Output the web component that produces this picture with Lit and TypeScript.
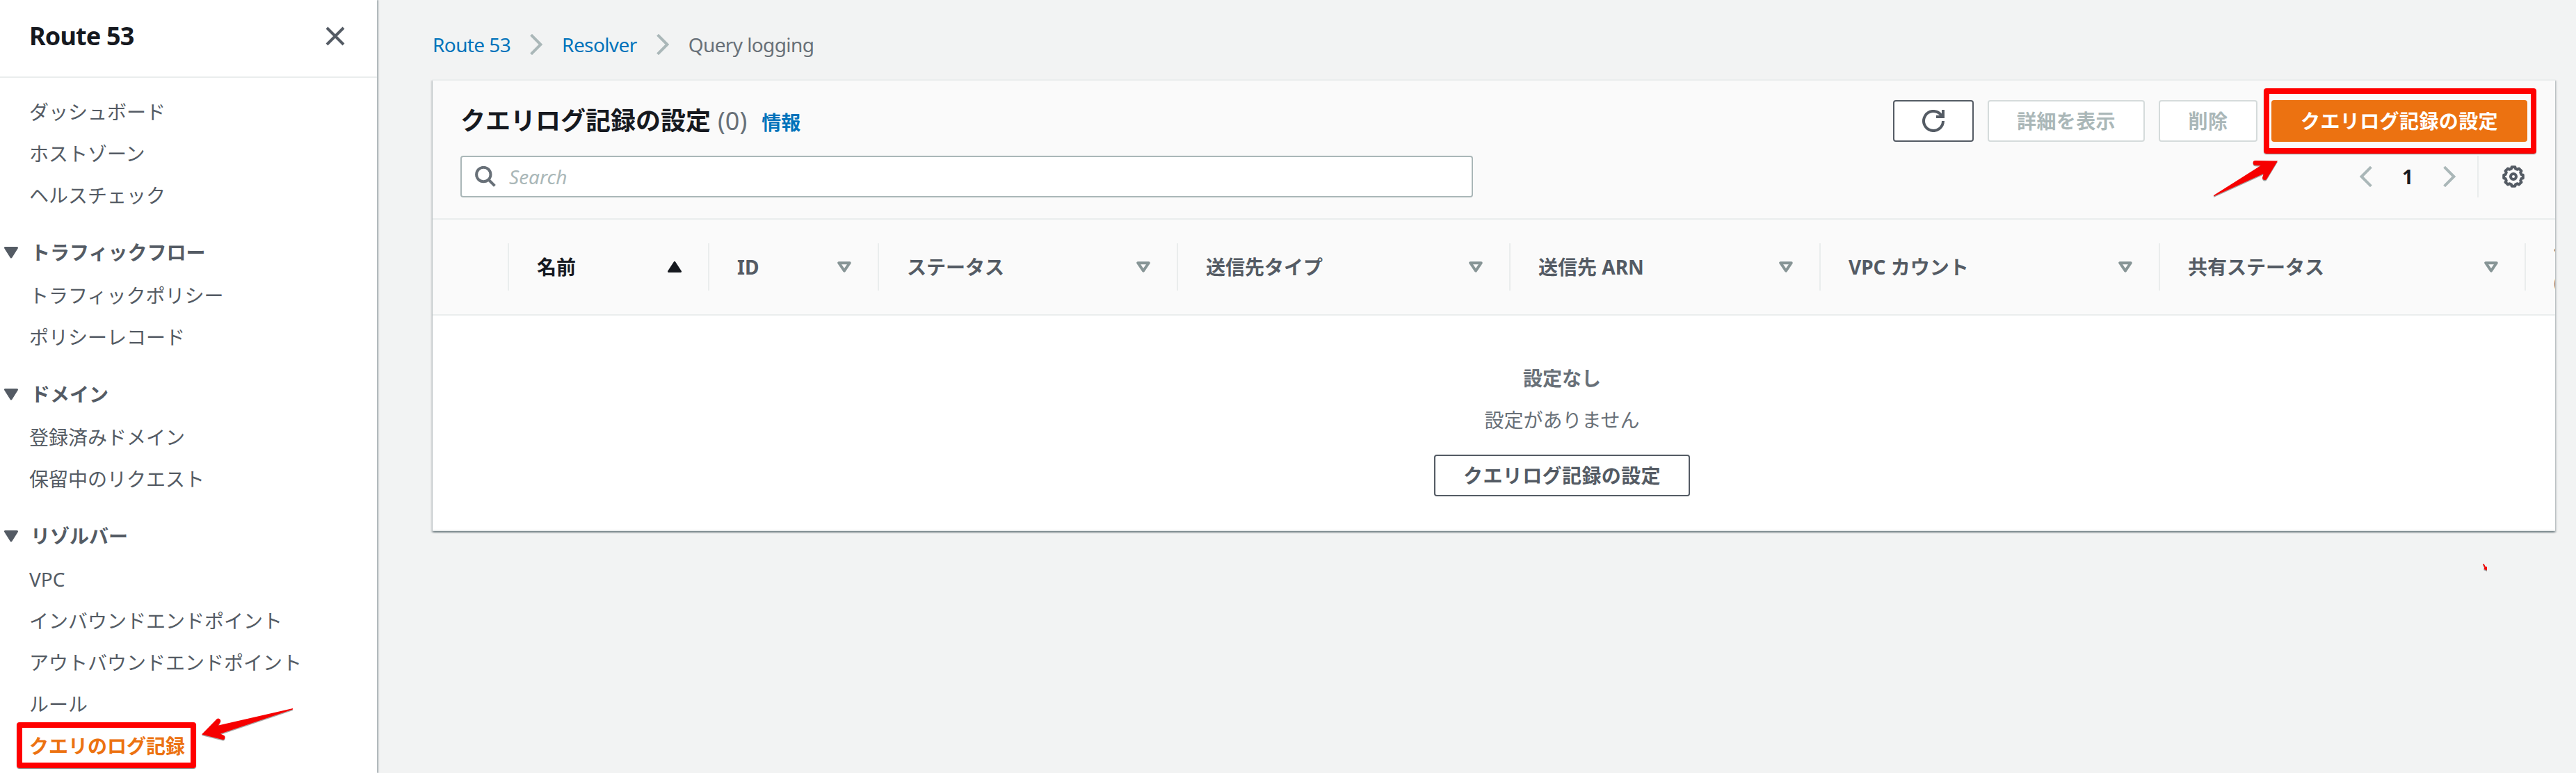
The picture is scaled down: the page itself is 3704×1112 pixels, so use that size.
import { LitElement, html, css, svg } from "lit";
import { customElement } from "lit/decorators.js";

interface NavGroup {
  title?: string;
  items: { label: string; active?: boolean }[];
}

const NAV: NavGroup[] = [
  { items: [{ label: "ダッシュボード" }, { label: "ホストゾーン" }, { label: "ヘルスチェック" }] },
  { title: "トラフィックフロー", items: [{ label: "トラフィックポリシー" }, { label: "ポリシーレコード" }] },
  { title: "ドメイン", items: [{ label: "登録済みドメイン" }, { label: "保留中のリクエスト" }] },
  {
    title: "リゾルバー",
    items: [
      { label: "VPC" },
      { label: "インバウンドエンドポイント" },
      { label: "アウトバウンドエンドポイント" },
      { label: "ルール" },
      { label: "クエリのログ記録", active: true },
    ],
  },
];

const COLUMNS = [
  { label: "名前", width: 288, sorted: true },
  { label: "ID", width: 244 },
  { label: "ステータス", width: 430 },
  { label: "送信先タイプ", width: 478 },
  { label: "送信先 ARN", width: 446 },
  { label: "VPC カウント", width: 488 },
  { label: "共有ステータス", width: 526 },
];

const chevron = (dir: "left" | "right") => html`<svg class="chevron" viewBox="0 0 18 30" width="18" height="30">
  <path d=${dir === "right" ? "M1.6 1.2 L15.4 15 L1.6 28.8" : "M16.4 1.2 L2.6 15 L16.4 28.8"} />
</svg>`;

const gearPath = (() => {
  const pts: string[] = [];
  const n = 8;
  for (let i = 0; i < n; i++) {
    const a = (i * 2 * Math.PI) / n - Math.PI / 2;
    for (const [off, r] of [[-0.17, 14], [0.17, 14], [0.26, 11.8], [0.525, 11.8]] as const) {
      pts.push(`${(16 + r * Math.cos(a + off)).toFixed(2)} ${(16 + r * Math.sin(a + off)).toFixed(2)}`);
    }
  }
  return `M${pts.join("L")}Z`;
})();

@customElement("app-root")
export class AppRoot extends LitElement {
  static styles = css`
    :host {
      display: block;
      position: relative;
      width: 3704px;
      height: 1112px;
      overflow: hidden;
      background: #f2f3f3;
      color: #545b64;
      font-family: "Noto Sans", "Noto Sans CJK JP", sans-serif;
      font-size: 28px;
      line-height: 44px;
    }
    * { box-sizing: border-box; }
    svg { display: block; flex: none; }
    .layout { display: flex; height: 1112px; }
    .sidebar {
      flex: none;
      width: 542px;
      background: #fff;
      box-shadow: 2px 0 2px 0 rgba(0, 28, 36, 0.3);
      white-space: nowrap;
    }
    .side-head {
      display: flex;
      align-items: center;
      justify-content: space-between;
      height: 112px;
      padding: 0 46px 6px 42px;
      border-bottom: 2px solid #eaeded;
    }
    .side-title { font-size: 36px; font-weight: 700; letter-spacing: -0.85px; color: #16191f; }
    .close path { stroke: #545b64; stroke-width: 4; fill: none; }
    .nav { padding-top: 27px; }
    .item { padding: 0 0 0 42px; margin-bottom: 16px; height: 44px; }
    .item.active { color: #ec7211; font-weight: 700; }
    .group-title {
      display: flex;
      align-items: center;
      gap: 18px;
      height: 44px;
      margin: 38px 0 18px;
      padding-left: 6px;
      font-weight: 700;
    }
    .main { flex: 1; min-width: 0; padding-left: 80px; }
    .crumbs { height: 114px; padding-top: 42px; color: #687078; letter-spacing: -0.6px; }
    .crumbs a { color: #0073bb; }
    .crumbs .chevron { margin: 0 28px; }
    .crumb-row { display: flex; align-items: center; height: 44px; }
    .chevron path { fill: none; stroke: #aab7b8; stroke-width: 4; }
    .panel {
      width: 3052px;
      height: 650px;
      border-top: 2px solid #eaeded;
      border-bottom: 2px solid #eaeded;
      background: #fff;
      box-shadow: 0 2px 2px 0 rgba(0, 28, 36, 0.3), 2px 2px 2px 0 rgba(0, 28, 36, 0.15), -2px 2px 2px 0 rgba(0, 28, 36, 0.15);
    }
    .panel-head {
      height: 200px;
      padding: 28px 40px 0;
      background: #fafafa;
      border-bottom: 2px solid #eaeded;
    }
    .title-row { display: flex; justify-content: space-between; height: 60px; }
    .title { display: flex; align-items: baseline; height: 60px; line-height: 60px; white-space: nowrap; }
    .title h1 { margin: 0; font-size: 36px; font-weight: 700; color: #16191f; }
    .count { margin-left: 10px; font-size: 36px; color: #687078; }
    .info { margin-left: 21px; font-weight: 700; color: #0073bb; }
    .actions { display: flex; gap: 20px; }
    .btn {
      display: flex;
      align-items: center;
      justify-content: center;
      flex: none;
      height: 60px;
      border: 2px solid #545b64;
      border-radius: 4px;
      background: #fff;
      color: #545b64;
      font-weight: 700;
      letter-spacing: 0.4px;
      white-space: nowrap;
    }
    .w-icon { width: 116px; }
    .w-detail { width: 226px; }
    .w-delete { width: 142px; }
    .w-create { width: 368px; }
    .disabled { border-color: #d5dbdb; color: #aab7b8; }
    .primary { border-color: #ec7211; background: #ec7211; color: #fff; }
    .filter-row { display: flex; justify-content: space-between; margin-top: 20px; }
    .search {
      display: flex;
      align-items: center;
      gap: 19px;
      width: 1456px;
      height: 60px;
      padding-left: 19px;
      border: 2px solid #aab7b8;
      border-radius: 4px;
      background: #fff;
      color: #aab7b8;
      font-style: italic;
    }
    .pager { display: flex; align-items: center; height: 60px; padding-right: 4px; }
    .page { width: 102px; text-align: center; font-weight: 700; color: #16191f; }
    .sep { width: 2px; height: 60px; margin: 0 34px 0 31px; background: #eaeded; }
    .scroll { overflow: hidden; }
    .table { width: 3248px; }
    .thead {
      display: flex;
      align-items: center;
      height: 138px;
      background: #fafafa;
      border-bottom: 2px solid #eaeded;
      font-weight: 700;
      white-space: nowrap;
    }
    .th {
      display: flex;
      flex: none;
      align-items: center;
      justify-content: space-between;
      height: 68px;
      padding: 0 38px 0 40px;
      border-right: 2px solid #eaeded;
    }
    .th.select { width: 110px; }
    .th.last { width: 238px; border-right: 0; }
    .th.sorted { color: #16191f; }
    .empty {
      display: flex;
      flex-direction: column;
      align-items: center;
      padding-top: 68px;
      color: #687078;
    }
    .empty-title { font-weight: 700; margin-bottom: 16px; }
    .empty .btn { margin-top: 28px; }
    .mark { position: absolute; border: 8px solid #f00; border-radius: 4px; box-shadow: 0 1px 1px rgba(0, 0, 0, 0.5); }
    .mark-nav { left: 24px; top: 1039px; width: 258px; height: 66px; }
    .mark-create { left: 3255px; top: 127px; width: 392px; height: 94px; }
    .arrows { position: absolute; left: 0; top: 0; pointer-events: none; }
    .arrows path { fill: #f60000; }
    .arrows .shade { fill: #000; opacity: 0.35; }
  `;

  private sortIcon(sorted?: boolean) {
    return sorted
      ? html`<svg width="20" height="16" viewBox="0 0 20 16"><path d="M10 1.5 L18.5 14.5 H1.5 Z" fill="#16191f" stroke="#16191f" stroke-width="3" stroke-linejoin="round" /></svg>`
      : html`<svg width="20" height="16" viewBox="0 0 20 16"><path d="M2.2 2.2 H17.8 L10 13.6 Z" fill="none" stroke="#879596" stroke-width="4" stroke-linejoin="round" /></svg>`;
  }

  render() {
    const arrows = [
      "M421 1019 L314 1043.5 L317.3 1037.5 A3.6 3.6 0 0 0 312 1034 L290 1056.5 L321 1064.3 A3.6 3.6 0 0 0 322.5 1058.3 L317 1055.5 L421 1020.5 Z",
      "M3183 281 L3250.5 238.3 L3243 237.7 A3.4 3.4 0 0 1 3243 230.9 L3275 231.5 L3259 258 A3.5 3.5 0 0 1 3253 256 L3254.5 250 L3183 282.5 Z",
      "M3570 811 H3571.5 L3574.5 816 L3576 815 V820.5 L3571 818.5 L3572.5 817 Z",
    ];
    return html`
      <div class="layout">
        <aside class="sidebar">
          <div class="side-head">
            <span class="side-title">Route 53</span>
            <svg class="close" width="28" height="28" viewBox="0 0 28 28"><path d="M2 2 L26 26 M26 2 L2 26" /></svg>
          </div>
          <nav class="nav">
            ${NAV.map(
              (g) => html`
                ${g.title
                  ? html`<div class="group-title">
                      <svg width="20" height="17" viewBox="0 0 20 17"><path d="M1.5 1.5 H18.5 L10 15 Z" fill="#545b64" stroke="#545b64" stroke-width="3" stroke-linejoin="round" /></svg>
                      <span>${g.title}</span>
                    </div>`
                  : null}
                ${g.items.map((i) => html`<div class="item ${i.active ? "active" : ""}">${i.label}</div>`)}
              `
            )}
          </nav>
        </aside>
        <main class="main">
          <div class="crumbs">
            <div class="crumb-row">
              <a>Route 53</a>${chevron("right")}<a>Resolver</a>${chevron("right")}<span>Query logging</span>
            </div>
          </div>
          <section class="panel">
            <div class="panel-head">
              <div class="title-row">
                <div class="title">
                  <h1>クエリログ記録の設定</h1>
                  <span class="count">(0)</span>
                  <span class="info">情報</span>
                </div>
                <div class="actions">
                  <div class="btn w-icon">
                    <svg width="32" height="32" viewBox="0 0 32 32" fill="none" stroke="#545b64" stroke-width="4">
                      <path d="M30 16 A14 14 0 1 1 26 6.2 L29 10" /><path d="M30 0 V10 H20" />
                    </svg>
                  </div>
                  <div class="btn disabled w-detail">詳細を表示</div>
                  <div class="btn disabled w-delete">削除</div>
                  <div class="btn primary w-create">クエリログ記録の設定</div>
                </div>
              </div>
              <div class="filter-row">
                <div class="search">
                  <svg width="30" height="30" viewBox="0 0 30 30" fill="none" stroke="#687078" stroke-width="4">
                    <circle cx="12.3" cy="12" r="10.2" /><path d="M19.5 19.5 L28.4 28.4" />
                  </svg>
                  <span>Search</span>
                </div>
                <div class="pager">
                  ${chevron("left")}<span class="page">1</span>${chevron("right")}
                  <span class="sep"></span>
                  <svg width="32" height="32" viewBox="0 0 32 32" fill="none" stroke="#545b64" stroke-width="4" stroke-linejoin="round">
                    ${svg`<path d=${gearPath} />`}<circle cx="16" cy="16" r="4" />
                  </svg>
                </div>
              </div>
            </div>
            <div class="scroll">
              <div class="table">
                <div class="thead">
                  <div class="th select"></div>
                  ${COLUMNS.map(
                    (c) => html`<div class="th ${c.sorted ? "sorted" : ""}" style="width:${c.width}px">
                      <span>${c.label}</span>${this.sortIcon(c.sorted)}
                    </div>`
                  )}
                  <div class="th last"><span>作成時刻<br />(UTC)</span></div>
                </div>
                <div class="empty">
                  <div class="empty-title">設定なし</div>
                  <div>設定がありません</div>
                  <div class="btn w-create">クエリログ記録の設定</div>
                </div>
              </div>
            </div>
          </section>
        </main>
      </div>
      <div class="mark mark-nav"></div>
      <div class="mark mark-create"></div>
      <svg class="arrows" width="3704" height="1112" viewBox="0 0 3704 1112">
        ${arrows.map((d) => svg`<path class="shade" d=${d} transform="translate(0 1.5)" /><path d=${d} />`)}
      </svg>
    `;
  }
}
